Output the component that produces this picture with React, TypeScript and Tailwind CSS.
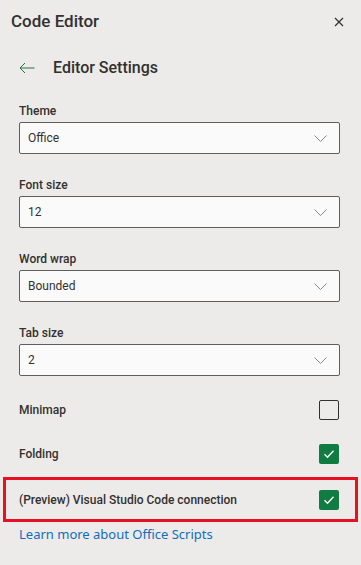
// Code Editor pane — Editor Settings view.

const FONT = "font-['Segoe_UI','Roboto',sans-serif]";

const SELECTS = [
  { label: "Theme", value: "Office" },
  { label: "Font size", value: "12" },
  { label: "Word wrap", value: "Bounded" },
  { label: "Tab size", value: "2" },
];

function Chevron() {
  return (
    <svg width="13" height="7" viewBox="0 0 13 7" fill="none">
      <path d="M0.5 0.5l6 6 6-6" stroke="#8a8886" strokeWidth="1" />
    </svg>
  );
}

function Checkbox({ checked }: { checked: boolean }) {
  if (!checked) {
    return <div className="h-5 w-5 rounded-[2px] border border-[#323130] bg-transparent" />;
  }
  return (
    <div className="flex h-5 w-5 items-center justify-center rounded-[2px] bg-[#107c41]">
      <svg width="12" height="10" viewBox="0 0 12 10" fill="none">
        <path d="M1.5 5.2l3 3 6-6.5" stroke="#ffffff" strokeWidth="1.3" />
      </svg>
    </div>
  );
}

export default function App() {
  return (
    <div className={`h-[565px] w-[361px] overflow-hidden bg-[#edebe9] text-[#323130] ${FONT}`}>
      {/* Header */}
      <div className="flex h-[44px] items-center justify-between pl-[11px] pr-[17px]">
        <h1 className="text-[17px] font-medium">Code Editor</h1>
        <svg width="10" height="10" viewBox="0 0 10 10" fill="none">
          <path d="M1 1l8 8M9 1l-8 8" stroke="#323130" strokeWidth="1.2" />
        </svg>
      </div>

      {/* Sub header */}
      <div className="flex h-[48px] items-center gap-[18px] pl-[19px]">
        <svg width="16" height="12" viewBox="0 0 16 12" fill="none">
          <path d="M15.5 6H1M6 1L1 6l5 5" stroke="#217346" strokeWidth="1" />
        </svg>
        <h2 className="text-[16px] font-medium">Editor Settings</h2>
      </div>

      {/* Select settings */}
      <div className="flex flex-col gap-[20px] pl-[19px] pr-[21px] pt-[8px]">
        {SELECTS.map((s) => (
          <div key={s.label} className="flex flex-col">
            <label className="text-[12px] font-medium leading-[22px]">{s.label}</label>
            <div className="flex h-[32px] items-center justify-between rounded-[2px] border border-[#605e5c] bg-[#fafafa] pl-[8px] pr-[12px]">
              <span className="text-[12px]">{s.value}</span>
              <Chevron />
            </div>
          </div>
        ))}
      </div>

      {/* Checkbox settings */}
      <div className="mt-[12px] flex flex-col px-[3px]">
        <div className="flex h-[44px] items-center justify-between pl-[16px] pr-[19px]">
          <span className="text-[12px] font-medium">Minimap</span>
          <Checkbox checked={false} />
        </div>
        <div className="flex h-[44px] items-center justify-between pl-[16px] pr-[19px]">
          <span className="text-[12px] font-medium">Folding</span>
          <Checkbox checked />
        </div>
        <div className="mt-[1px] flex h-[45px] items-center justify-between border-[3px] border-[#e81123] pl-[13px] pr-[16px]">
          <span className="text-[12px] font-medium">(Preview) Visual Studio Code connection</span>
          <Checkbox checked />
        </div>
      </div>

      <a className="mt-[3px] block pl-[19px] font-['Noto_Sans',sans-serif] text-[13px] text-[#106ebe]">
        Learn more about Office Scripts
      </a>
    </div>
  );
}
